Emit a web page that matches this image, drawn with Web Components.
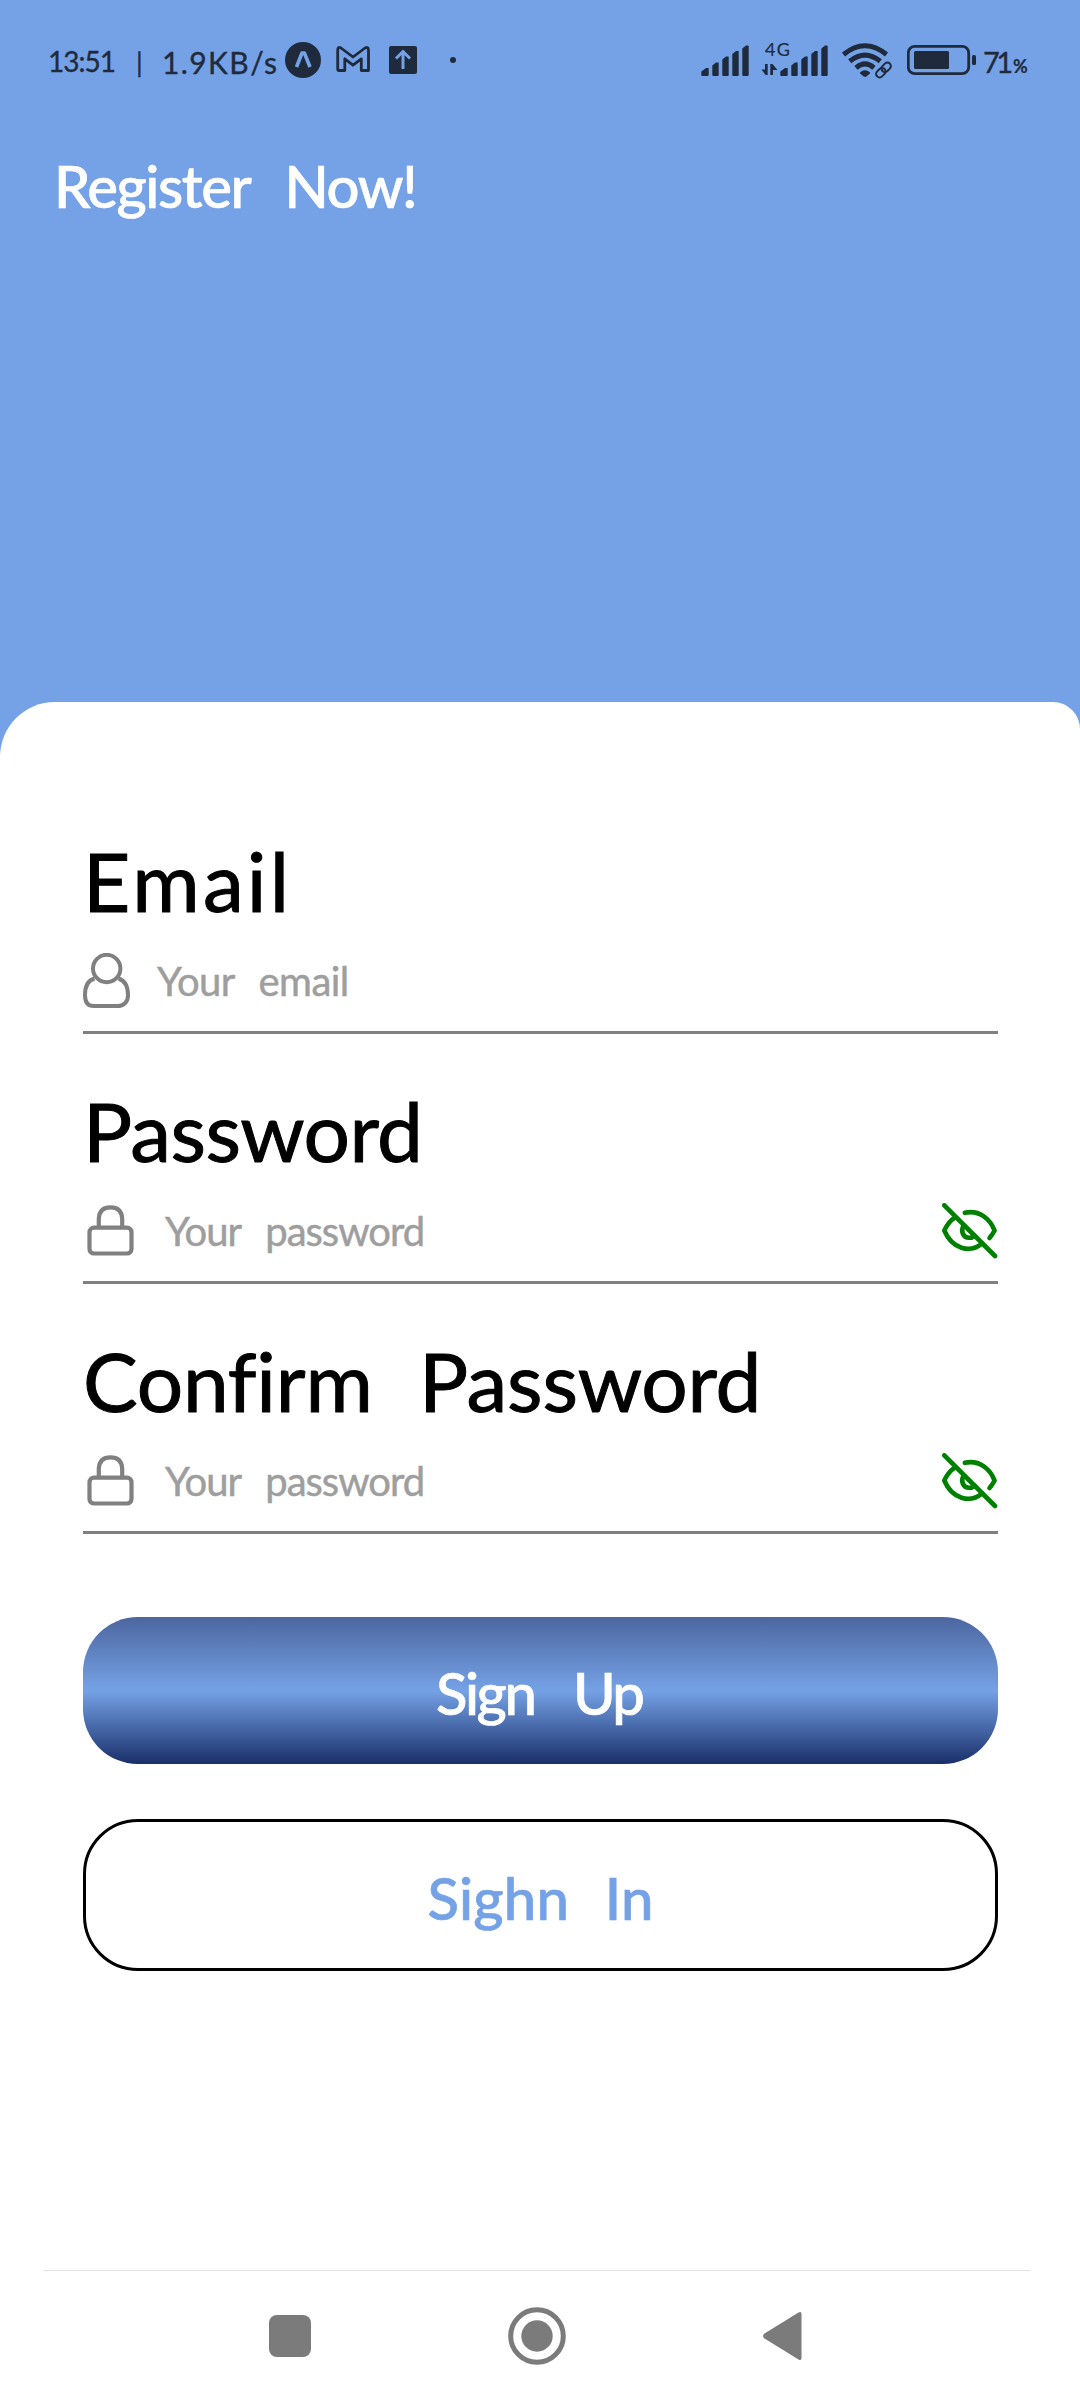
<!DOCTYPE html>
<html lang="en">
<head>
<meta charset="utf-8">
<title>Register</title>
<style>
  html, body { margin: 0; background: #fff; }
  body { width: 1080px; height: 2400px; overflow: hidden; font-family: Lato, "Open Sans", sans-serif; }
</style>
</head>
<body>
<register-screen></register-screen>
<script>
  const define = (name, html, setup) => customElements.define(name, class extends HTMLElement {
    connectedCallback() {
      if (this.shadowRoot) return;
      this.attachShadow({ mode: 'open' }).innerHTML = html;
      if (setup) setup(this, this.shadowRoot);
    }
  });

  // Single line of text spaced out to a set width, with a set gap between words.
  customElements.define('fit-text', class extends HTMLElement {
    connectedCallback() {
      if (this.shadowRoot) return;
      const size = +this.getAttribute('size'), width = +this.getAttribute('width');
      const gap = +(this.getAttribute('gap') || 0), text = this.getAttribute('text');
      const weight = this.getAttribute('weight') || 400;
      const ctx = document.createElement('canvas').getContext('2d');
      ctx.font = `${weight} ${size}px Lato, "Open Sans", sans-serif`;
      const words = text.split(' ');
      const natural = words.reduce((s, w) => s + ctx.measureText(w).width, 0);
      const slots = words.reduce((s, w) => s + w.length - 1, 0) || 1;
      const ls = (width - gap * (words.length - 1) - natural) / slots;
      const ws = gap - ctx.measureText(' ').width - 2 * ls;
      this.attachShadow({ mode: 'open' }).innerHTML = `<style>
        :host { display: block; flex: none; width: ${width}px; font-size: ${size}px; font-weight: ${weight}; line-height: 1.2; white-space: nowrap; }
        span { letter-spacing: ${ls}px; word-spacing: ${ws}px; -webkit-text-stroke: 0.012em currentColor; }
      </style><span></span>`;
      this.shadowRoot.querySelector('span').textContent = text;
    }
  });

  const icons = {
    expo: ['285 42 36 36', '<circle cx="303" cy="60" r="18" fill="#1f2b3d"/><path d="M296.5 67 302 53h2.4L310 67" fill="none" stroke="#75a2e6" stroke-width="3.6" stroke-linejoin="round"/>'],
    mail: ['336 42 35 36', '<path d="M337.7 50Q337.7 46.4 341 48L353 57 365 48Q368.5 46.4 368.5 50V70.5H361.3V58.8L353 65.2 344.8 58.8V70.5H339Q337.7 70.5 337.7 69Z" fill="none" stroke="#1f2b3d" stroke-width="2.8" stroke-linejoin="round"/>'],
    upload: ['389 42 28 36', '<rect x="389" y="46" width="28" height="28" rx="2" fill="#1f2b3d"/><path d="M403 69V52M396 58.5 403 51.5 410 58.5" fill="none" stroke="#75a2e6" stroke-width="3"/>'],
    dot: ['450 42 6 36', '<circle cx="453" cy="60" r="3" fill="#1f2b3d"/>'],
    signal: ['701 40 48 40', '<g fill="#1f2b3d"><path d="M701.3 75V71.5L706 68h2.7v7q0 1-1 1h-5.400q-1 0-1-1Z"/><path d="M712.300 75V65.500L716 62.500h2.700V75q0 1-1 1h-4.400q-1 0-1-1Z"/><path d="M722.300 75V59.500L726 56.500h2.700V75q0 1-1 1h-4.400q-1 0-1-1Z"/><path d="M732.300 75V54L736 51h2.700V75q0 1-1 1h-4.400q-1 0-1-1Z"/><path d="M742.300 75V48.500L746 45.500h1.700q1 0 1 1V75q0 1-1 1h-4.400q-1 0-1-1Z"/></g>'],
    arrows: ['761 60 17 16', '<path d="M765 64H767.700V75H765.500L761.500 69.500H765ZM770.300 75V64H772.500L777.500 70H773V75Z" fill="#1f2b3d"/>'],
    wifi: ['842 40 50 40', '<g fill="none" stroke="#1f2b3d" stroke-width="5"><path d="M843.500 54.500Q865 37 886.500 54.500"/><path d="M849.700 61.300Q865 49 880.300 61.300"/><path d="M856 67.800Q865 60 874 67.800"/></g><path d="M860 72.500Q865 68 870 72.500V73.500L866 76.800H864L860 73.500Z" fill="#1f2b3d"/><g fill="none" stroke="#1f2b3d" stroke-width="2" transform="rotate(-45 883.500 70)"><rect x="874.500" y="66.500" width="10.500" height="7" rx="3.500"/><rect x="882" y="66.500" width="10.500" height="7" rx="3.500"/></g>'],
    battery: ['907 40 70 40', '<rect x="908.300" y="46.300" width="60.400" height="27.400" rx="6.500" fill="none" stroke="#1f2b3d" stroke-width="2.800"/><rect x="914" y="51" width="35" height="18" rx="1.500" fill="#1f2b3d"/><rect x="972" y="55" width="4" height="10" rx="1.500" fill="#1f2b3d"/>'],
    user: ['83 953 48 55', '<g fill="none" stroke="#808080" stroke-width="4"><circle cx="106.700" cy="968.500" r="13.700"/><path d="M94.500 978.500C87.500 980.500 85 987 85 995 85 1002.500 88 1006 93.500 1006H117.500C123.500 1006 128 1002 128 995.500 128 987 125 980.500 118.500 978.500"/></g>'],
    lock: ['87 1205 47 51', '<g fill="none" stroke="#808080" stroke-width="4.200"><rect x="89.500" y="1227.700" width="42" height="25.800" rx="4.500"/><path d="M98.800 1227.700V1218.500Q99.500 1207.300 110.500 1207.300 121.500 1207.300 122.200 1218.500V1227.700"/></g>'],
    eye: ['943 1203 56 56', '<g fill="none" stroke="#008000" stroke-width="4.600" stroke-linecap="round" stroke-linejoin="round"><path d="M945.300 1205.300 996 1256"/><path d="M965.800 1212.800C980.500 1209.500 991 1219 995.600 1230.500Q993.500 1234.500 990.500 1238"/><path d="M956 1217.500Q949.500 1221.500 945.300 1230.500C953 1249 971 1253.500 983 1243.500"/><path d="M964.500 1226C961.500 1231 964 1237.800 970 1237.800Q973.500 1237.800 975.500 1235.800"/><path d="M968.500 1229.500 974 1235" stroke-width="3"/></g>'],
    recent: ['269 2314 42 42', '<rect x="269" y="2314" width="42" height="42" rx="8" fill="#7b7b7b"/>'],
    home: ['508 2306 58 58', '<circle cx="537" cy="2335" r="26.300" fill="none" stroke="#7b7b7b" stroke-width="5"/><circle cx="537" cy="2335" r="15.700" fill="#7b7b7b"/>'],
    back: ['763 2310 39 50', '<path d="M764.500 2332.500 798.500 2311.500Q801.500 2310 801.500 2313V2357Q801.500 2360 798.500 2358.500L764.500 2337.500Q761.500 2335 764.500 2332.500Z" fill="#7b7b7b"/>']
  };
  customElements.define('ui-icon', class extends HTMLElement {
    connectedCallback() {
      if (this.shadowRoot) return;
      const [box, body] = icons[this.getAttribute('name')];
      const [, , w, h] = box.split(' ');
      this.attachShadow({ mode: 'open' }).innerHTML =
        `<style>:host{display:block;flex:none}svg{display:block}</style><svg viewBox="${box}" width="${w}" height="${h}">${body}</svg>`;
    }
  });

  define('net-signal', `<style>
      :host { display: flex; height: 40px; }
      .left { width: 19px; display: flex; flex-direction: column; justify-content: space-between; }
      fit-text { line-height: 1; margin: 0 0 0 4px; height: 19px; }
      .arrows { margin-bottom: 4px; }
    </style>
    <div class="left"><fit-text size="18" width="25" text="4G"></fit-text><ui-icon class="arrows" name="arrows"></ui-icon></div>
    <ui-icon name="signal"></ui-icon>`);

  define('status-bar', `<style>
      :host { display: flex; align-items: center; box-sizing: border-box; height: 120px; padding: 0 53px 0 48px; color: #1f2b3d; }
      .side { display: flex; align-items: center; }
      .right { margin-left: auto; }
      fit-text { margin-top: 4px; }
    </style>
    <div class="side">
      <fit-text size="28" width="68" text="13:51"></fit-text>
      <fit-text size="27" width="8" text="|" style="margin-left:20px"></fit-text>
      <fit-text size="30" width="115" text="1.9KB/s" style="margin-left:18px"></fit-text>
      <ui-icon name="expo" style="margin-left:8px"></ui-icon>
      <ui-icon name="mail" style="margin-left:15px"></ui-icon>
      <ui-icon name="upload" style="margin-left:18px"></ui-icon>
      <ui-icon name="dot" style="margin-left:33px"></ui-icon>
    </div>
    <div class="side right">
      <ui-icon name="signal"></ui-icon>
      <net-signal style="margin-left:12px"></net-signal>
      <ui-icon name="wifi" style="margin-left:14px"></ui-icon>
      <ui-icon name="battery" style="margin-left:15px"></ui-icon>
      <fit-text size="29" width="30" text="71" style="margin-left:6px"></fit-text>
      <fit-text size="18" width="14" text="%" weight="700" style="margin-top:13px"></fit-text>
    </div>`);

  define('form-field', `<style>
      :host { display: block; height: 209px; margin-bottom: 41px; }
      .label { box-sizing: border-box; height: 106px; padding-top: 6px; color: #000; }
      .row { display: flex; align-items: flex-start; box-sizing: border-box; height: 103px; padding-top: 22px; border-bottom: 3px solid #808080; }
      .hint { color: #9e9e9e; margin-top: 4px; }
      .end { margin-left: auto; margin-top: 0; }
    </style>
    <div class="label"></div><div class="row"></div>`, (el, root) => {
    const a = n => el.getAttribute(n), lock = a('icon') === 'lock';
    root.querySelector('.label').innerHTML = `<fit-text size="82" width="${a('label-width')}" gap="${a('label-gap') || 0}" text="${a('label')}"></fit-text>`;
    root.querySelector('.row').innerHTML =
      `<ui-icon name="${a('icon')}" style="margin-left:${lock ? '4px;margin-top:2px' : '0'}"></ui-icon>
       <fit-text class="hint" size="40" width="${a('hint-width')}" gap="24" text="${a('hint')}" style="margin-left:${lock ? 31 : 26}px"></fit-text>
       ${lock ? '<ui-icon class="end" name="eye"></ui-icon>' : ''}`;
  });

  define('pill-button', `<style>
      :host { display: flex; align-items: center; justify-content: center; box-sizing: border-box; border-radius: 55px; height: 147px; padding-top: 5px; color: #fff;
        background: linear-gradient(#4c669f, #75a2e6 50%, #192f6a); }
      :host([outline]) { height: 152px; margin-top: 55px; background: #fff; border: 3px solid #000; color: #75a2e6; }
    </style><slot></slot>`);

  define('nav-bar', `<style>
      :host { display: flex; align-items: center; box-sizing: border-box; height: 130px; margin: auto 50px 0 44px; padding-left: 225px; gap: 197px; border-top: 1px solid #e2e2e2; }
    </style><ui-icon name="recent"></ui-icon><ui-icon name="home"></ui-icon><ui-icon name="back"></ui-icon>`);

  define('register-screen', `<style>
      :host { display: flex; flex-direction: column; width: 1080px; height: 2400px; background: #75a2e6; }
      header { box-sizing: border-box; height: 582px; padding: 31px 0 0 54px; color: #fff; }
      main { flex: 1; display: flex; flex-direction: column; background: #fff; border-radius: 55px 27px 0 0; }
      form { padding: 123px 82px 0 83px; }
      .actions { padding: 42px 0 0; }
    </style>
    <status-bar></status-bar>
    <header><fit-text size="58" width="365" gap="34" text="Register Now!" weight="500"></fit-text></header>
    <main>
      <form>
        <form-field label="Email" label-width="206" icon="user" hint="Your email" hint-width="193"></form-field>
        <form-field label="Password" label-width="340" icon="lock" hint="Your password" hint-width="261"></form-field>
        <form-field label="Confirm Password" label-width="677" label-gap="46" icon="lock" hint="Your password" hint-width="261"></form-field>
        <div class="actions">
          <pill-button><fit-text size="58" width="209" gap="36" text="Sign Up" weight="500"></fit-text></pill-button>
          <pill-button outline><fit-text size="58" width="226" gap="36" text="Sighn In" weight="500"></fit-text></pill-button>
        </div>
      </form>
      <nav-bar></nav-bar>
    </main>`);
</script>
</body>
</html>
